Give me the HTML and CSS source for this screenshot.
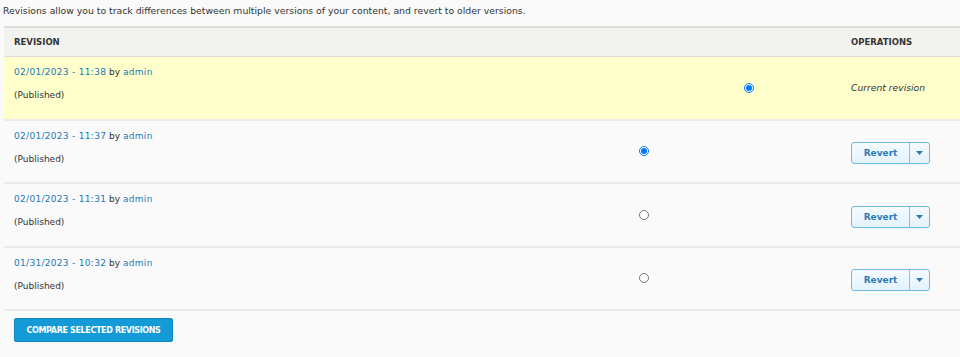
FILE: index.html
```html
<!DOCTYPE html>
<html>
<head>
<meta charset="utf-8">
<link rel="stylesheet" href="styles.css">
</head>
<body>
<p class="intro">Revisions allow you to track differences between multiple versions of your content, and revert to older versions.</p>
<table class="revs">
  <thead>
    <tr><th class="c-rev">REVISION</th><th class="c-left"></th><th class="c-right"></th><th class="c-ops">OPERATIONS</th></tr>
  </thead>
  <tbody>
    <tr class="current">
      <td class="c-rev"><div class="line"><a href="#">02/01/2023 - 11:38</a> by <a href="#">admin</a></div><div class="status">(Published)</div></td>
      <td class="c-left"></td>
      <td class="c-right"><input type="radio" name="r" checked></td>
      <td class="c-ops"><em>Current revision</em></td>
    </tr>
    <tr>
      <td class="c-rev"><div class="line"><a href="#">02/01/2023 - 11:37</a> by <a href="#">admin</a></div><div class="status">(Published)</div></td>
      <td class="c-left"><input type="radio" name="l" checked></td>
      <td class="c-right"></td>
      <td class="c-ops"><span class="split"><span class="main">Revert</span><span class="tog"><svg width="7" height="4" viewBox="0 0 7 4"><path d="M0 0h7L3.5 4z" fill="#2b7ab3"/></svg></span></span></td>
    </tr>
    <tr>
      <td class="c-rev"><div class="line"><a href="#">02/01/2023 - 11:31</a> by <a href="#">admin</a></div><div class="status">(Published)</div></td>
      <td class="c-left"><input type="radio" name="l"></td>
      <td class="c-right"></td>
      <td class="c-ops"><span class="split"><span class="main">Revert</span><span class="tog"><svg width="7" height="4" viewBox="0 0 7 4"><path d="M0 0h7L3.5 4z" fill="#2b7ab3"/></svg></span></span></td>
    </tr>
    <tr>
      <td class="c-rev"><div class="line"><a href="#">01/31/2023 - 10:32</a> by <a href="#">admin</a></div><div class="status">(Published)</div></td>
      <td class="c-left"><input type="radio" name="l"></td>
      <td class="c-right"></td>
      <td class="c-ops"><span class="split"><span class="main">Revert</span><span class="tog"><svg width="7" height="4" viewBox="0 0 7 4"><path d="M0 0h7L3.5 4z" fill="#2b7ab3"/></svg></span></span></td>
    </tr>
  </tbody>
</table>
<div class="actions"><button class="compare">COMPARE SELECTED REVISIONS</button></div>
</body>
</html>
```
FILE: styles.css
```css
html, body { margin: 0; padding: 0; }
body {
  background: #fafafa;
  font-family: "DejaVu Sans", Verdana, sans-serif;
  font-size: 9px;
  color: #333;
  padding-left: 4px;
  width: 956px;
}
.intro { margin: 0; padding: 5px 0 0 0; height: 21px; margin-left: -1px; line-height: 12px; font-size: 9.3px; }
.revs { border-collapse: collapse; width: 956px; table-layout: fixed; }
.revs th {
  background: #f3f3ef;
  border-top: 2px solid #ddd;
  border-bottom: 1px solid #ddd;
  height: 28px;
  padding: 0 10px;
  text-align: left;
  font-size: 8.5px;
  font-weight: bold;
  color: #333;
}
.revs td { border-bottom: 2px solid #ebebeb; height: 61.5px; padding: 0 10px; vertical-align: top; }
.revs tr.current td { background: #ffffcc; }
.revs th.c-left, .revs th.c-right { padding: 0; }
.c-left { width: 105px; }
.c-right { width: 97px; }
.c-ops { width: 99px; }
.line { padding-top: 9px; line-height: 12px; }
.status { padding-top: 11px; line-height: 12px; }
a { color: #1a79b6; text-decoration: none; letter-spacing: 0.3px; }
.revs td.c-left, .revs td.c-right { vertical-align: middle; padding: 0; }
input[type=radio] { width: 10px; height: 10px; margin: 0; display: block; }
td.c-ops { vertical-align: middle; }
em { font-style: italic; color: #333; font-size: 9.2px; }
.split {
  display: inline-flex;
  height: 20px;
  border: 1px solid #6ebbe8;
  border-radius: 3px;
  background: linear-gradient(#f5fbff, #e3f2fd);
  overflow: hidden;
  margin-top: 4px;
}
.split .main { width: 57px; display: flex; align-items: center; justify-content: center; color: #2b7ab3; font-weight: bold; font-size: 9px; }
.split .tog { width: 19px; border-left: 1px solid #aab8c3; display: flex; align-items: center; justify-content: center; }
.actions { padding: 7px 0 0 10px; }
.compare {
  width: 159px; height: 24px;
  background: #149ad7;
  color: #fff;
  border: 1px solid #1088c3;
  border-radius: 2px;
  font-family: "DejaVu Sans", Verdana, sans-serif;
  font-size: 8px;
  font-weight: bold;
  letter-spacing: -0.35px;
  padding: 0;
}
```
